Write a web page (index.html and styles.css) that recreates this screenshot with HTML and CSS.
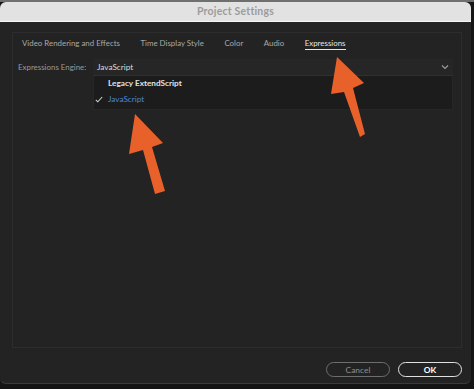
FILE: index.html
```html
<!DOCTYPE html>
<html lang="en">
<head>
    <meta charset="UTF-8">
    <title>Project Settings</title>
    <link rel="stylesheet" href="styles.css">
</head>
<body>
    <div class="backdrop"></div>
    <div class="win">
        <div class="win__title">Project Settings</div>
        <div class="win__body">
            <div class="panel">
                <div class="tabs">
                    <span class="tabs__item">Video Rendering and Effects</span>
                    <span class="tabs__item">Time Display Style</span>
                    <span class="tabs__item">Color</span>
                    <span class="tabs__item">Audio</span>
                    <span class="tabs__item tabs__item--active">Expressions</span>
                </div>
                <div class="field">
                    <span class="field__label">Expressions Engine:</span>
                    <div class="select">
                        <div class="select__value">
                            <span>JavaScript</span>
                            <svg class="select__chev" width="8" height="6" viewBox="0 0 8 6">
                                <path d="M1 1.5 L4 4.5 L7 1.5" fill="none" stroke="#9a9a9a" stroke-width="1.2"/>
                            </svg>
                        </div>
                        <div class="menu">
                            <div class="menu__item">Legacy ExtendScript</div>
                            <div class="menu__item menu__item--on">
                                <svg class="menu__check" width="8" height="7" viewBox="0 0 8 7">
                                    <path d="M0.8 3.8 L2.8 5.8 L7.2 1" fill="none" stroke="#d0d0d0" stroke-width="1.1"/>
                                </svg>
                                JavaScript
                            </div>
                        </div>
                    </div>
                </div>
            </div>
            <div class="actions">
                <button class="btn">Cancel</button>
                <button class="btn btn--primary">OK</button>
            </div>
        </div>
    </div>
    <svg class="arrows" width="474" height="389" viewBox="0 0 474 389">
        <polygon fill="#e8612b" points="135,114 163,143 152,147 165,191 155,194 143,150 129,154"/>
        <polygon fill="#e8612b" points="337,57 364,83 353,88 365,134 360,137 344,92 331,94"/>
    </svg>
</body>
</html>
```

FILE: styles.css
```css
body{
    margin: 0;
    width: 474px;
    height: 389px;
    background: #141414;
    font-family: Lato, "Open Sans", sans-serif;
    overflow: hidden;
    position: relative;
}
.backdrop{
    height: 2px;
    background: #6f6f6f;
}
.win{
    width: 471px;
    height: 382px;
    border-radius: 6px;
    overflow: hidden;
    background: #232323;
    border-bottom: 1px solid #3a3a3a;
    box-sizing: border-box;
}
.win__title{
    height: 19px;
    line-height: 19px;
    background: #e2e2e2;
    border-bottom: 1px solid #f4f4f4;
    text-align: center;
    font-size: 10.5px;
    font-weight: bold;
    color: #9c9c9c;
    letter-spacing: 0.2px;
}
.win__body{
    padding: 10px 9px 0 12px;
}
.panel{
    height: 316px;
    border: 1px solid #2d2d2d;
    box-sizing: border-box;
    padding: 3px 0 0 5px;
}
.tabs{
    display: flex;
    gap: 20.5px;
    padding-left: 4px;
    height: 17px;
}
.tabs__item{
    font-size: 7.9px;
    color: #a8a8a8;
    line-height: 14px;
}
.tabs__item--active{
    color: #e6e6e6;
    border-bottom: 1.5px solid #e6e6e6;
    height: 13px;
}
.field{
    display: flex;
    margin-top: 6px;
}
.field__label{
    font-size: 7.9px;
    color: #9a9a9a;
    width: 75px;
    line-height: 16px;
}
.select{
    width: 360px;
}
.select__value{
    height: 16px;
    display: flex;
    align-items: center;
    justify-content: space-between;
    padding: 0 4px;
    font-size: 8.2px;
    color: #dcdcdc;
    background: #262626;
}
.menu{
    background: #1c1c1c;
    border: 1px solid #262626;
    border-top-color: #303030;
    padding: 0 0 2px;
}
.menu__item{
    position: relative;
    font-size: 8.2px;
    color: #e2e2e2;
    font-weight: bold;
    padding-left: 14px;
    line-height: 15.5px;
}
.menu__item--on{
    color: #4d86d4;
    font-weight: normal;
}
.menu__check{
    position: absolute;
    left: 1px;
    top: 4px;
}
.actions{
    display: flex;
    justify-content: flex-end;
    gap: 8px;
    padding-top: 14px;
}
.btn{
    width: 64px;
    height: 15px;
    border-radius: 8px;
    background: transparent;
    border: 1.3px solid #6e6e6e;
    color: #8e8e8e;
    font-family: Lato, "Open Sans", sans-serif;
    font-size: 8.4px;
    padding: 0;
}
.btn--primary{
    border-color: #e0e0e0;
    color: #ffffff;
    font-weight: bold;
}
.arrows{
    position: absolute;
    left: 0;
    top: 0;
}
```
